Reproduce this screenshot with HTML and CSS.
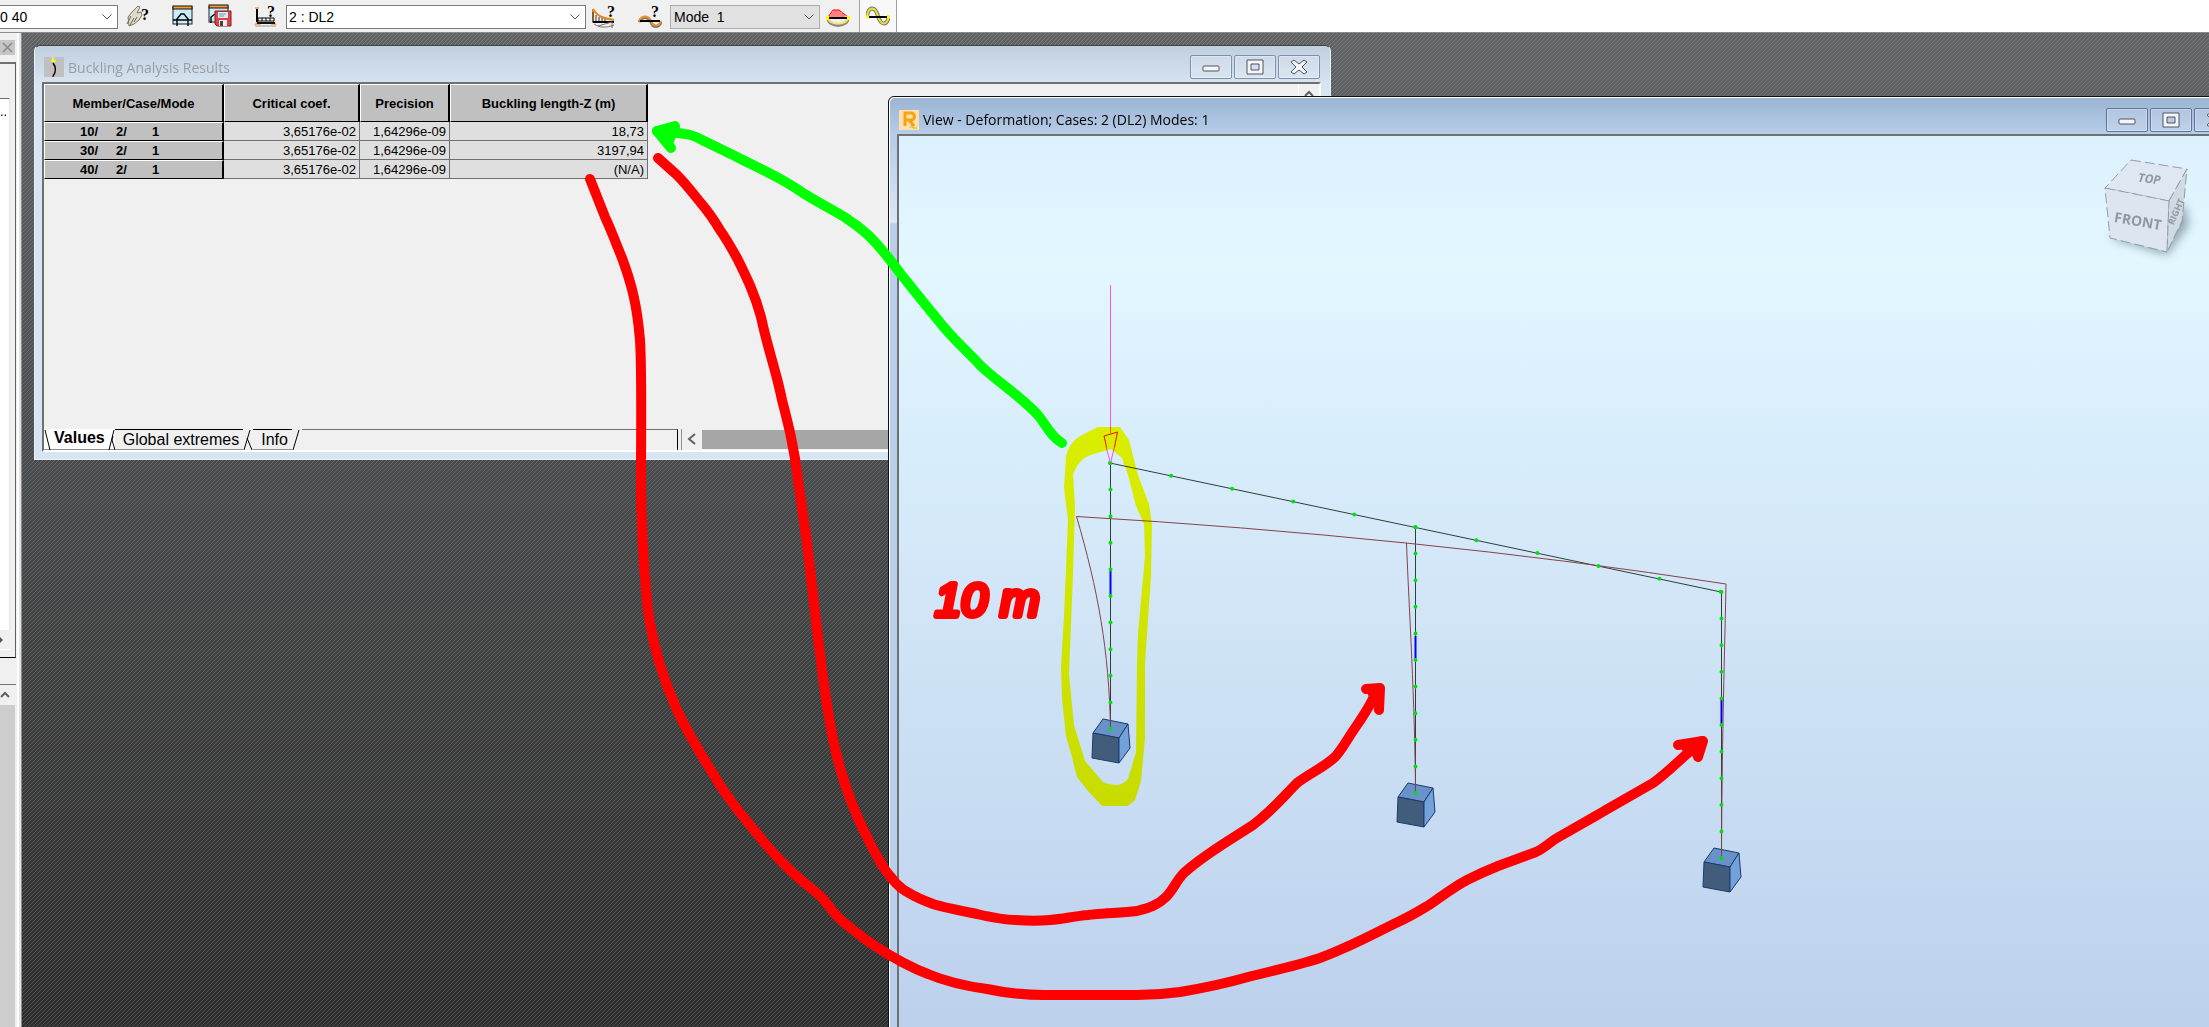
FILE: index.html
```html
<!DOCTYPE html>
<html lang="en">
<head>
  <meta charset="UTF-8" />
  <meta name="viewport" content="width=device-width, initial-scale=1.0" />
  <title>Buckling Analysis Results</title>
  <link rel="stylesheet" href="styles.css">
</head>
<body>
  <header class="topbar">
    <div class="toolbar">
      <select class="combo combo-members" aria-label="Members"><option>0 40</option></select>
      <button class="tool" aria-label="Select">
        <svg viewBox="0 0 24 24">
          <path d="M2 13l4-5 6-6 2 1-3 6 4-1 1 3-3 5-5 4-5 2z" fill="#e0dccc" stroke="#77776c"/>
          <path d="M1 20l4-8M4 21l4-7M8 18l3-5" stroke="#66665c" fill="none"/>
          <text x="15" y="16" class="q">?</text>
        </svg>
      </button>
      <button class="tool wide-left" aria-label="View">
        <svg viewBox="0 0 24 24">
          <rect x="1" y="3" width="19" height="17" fill="#c8ecfc" stroke="#222"/>
          <rect x="1" y="2" width="19" height="3" fill="#f89a2c" stroke="#111"/>
          <path d="M5 22v-7l4-5h3l4 5v7M1 16h19" fill="none" stroke="#000" stroke-width="1.4"/>
        </svg>
      </button>
      <button class="tool mid-left" aria-label="Save view">
        <svg viewBox="0 0 24 24">
          <rect x="1" y="3" width="19" height="15" fill="#c8ecfc" stroke="#222"/>
          <rect x="1" y="1" width="19" height="3" fill="#f89a2c" stroke="#111"/>
          <path d="M3 19v-6l4-3" fill="none" stroke="#000" stroke-width="1.4"/>
          <path d="M7 7h16v15h-14l-2-2z" fill="#e04048" stroke="#7c2024"/>
          <rect x="10" y="8" width="10" height="6" fill="#d8ecf4"/>
          <path d="M11 10h7M11 12h5" stroke="#7898a8"/>
          <rect x="11" y="16" width="8" height="6" fill="#eee"/>
          <rect x="12" y="17" width="3" height="5" fill="#444"/>
        </svg>
      </button>
      <button class="tool wide-left" aria-label="Load case">
        <svg viewBox="0 0 24 24">
          <path d="M0 21l4-5 3 5zM17 21l3-5 3 5z" fill="#f4b060"/>
          <path d="M3 4v14" stroke="#000" stroke-width="2"/>
          <path d="M1 4h4" stroke="#f4b060" stroke-width="2"/>
          <path d="M4 14h16v3H4zM8 14v3M12 14v3M16 14v3" fill="#fff" stroke="#000"/>
          <path d="M3 19h18" stroke="#111" stroke-width="2"/>
          <path d="M1 22h21" stroke="#999"/>
          <text x="13" y="13" class="q">?</text>
        </svg>
      </button>
      <select class="combo combo-case" aria-label="Case"><option>2 : DL2</option></select>
      <button class="tool" aria-label="Diagram">
        <svg viewBox="0 0 24 24">
          <path d="M1 5v14M1 5c5 8 10 9 21 11" fill="none" stroke="#e08820" stroke-width="2"/>
          <path d="M1 8v10M4 11v7M7 13v5M10 14v4M13 15v3" stroke="#333"/>
          <path d="M1 18h21" stroke="#000" stroke-width="2"/>
          <path d="M2 20c6 4 12 4 20 1M6 22l14-4v6" fill="none" stroke="#777"/>
          <text x="15" y="13" class="q">?</text>
        </svg>
      </button>
      <button class="tool wide-left" aria-label="Deformation">
        <svg viewBox="0 0 24 24">
          <path d="M1 18c3-6 9-6 12 0 2 6 8 6 10 0" fill="none" stroke="#777" stroke-width="3"/>
          <path d="M1 17c3-6 9-6 12 0 2 6 8 6 10 0" fill="none" stroke="#f09028" stroke-width="2"/>
          <path d="M2 17h20" stroke="#000" stroke-width="2"/>
          <text x="13" y="13" class="q">?</text>
        </svg>
      </button>
      <select class="combo combo-mode" aria-label="Mode"><option>Mode&nbsp; 1</option></select>
      <button class="tool" aria-label="Stress">
        <svg viewBox="0 0 24 24">
          <path d="M2 14c0 10 20 10 20 0" fill="none" stroke="#888" stroke-width="3"/>
          <path d="M2 13c0 9 20 9 20 0" fill="none" stroke="#f8e070" stroke-width="2"/>
          <path d="M2 13l5-7h6l9 7z" fill="#fff"/>
          <path d="M4 13v-2M6 13V8M8 13V6M10 13V6M12 13V6M14 13V7M16 13V9M18 13v-3" stroke="#f00"/>
          <path d="M2 13l5-7h6l9 7" fill="none" stroke="#f00"/>
          <path d="M2 14h20" stroke="#000" stroke-width="2"/>
          <path d="M0 14h3M21 14h3" stroke="#ff0" stroke-width="4"/>
        </svg>
      </button>
      <button class="tool pressed" aria-label="Buckling shape">
        <svg viewBox="0 0 24 24">
          <path d="M1 14c2-10 8-10 11 0s9 10 11 0" fill="none" stroke="#777" stroke-width="4"/>
          <path d="M1 14c2-10 8-10 11 0s9 10 11 0" fill="none" stroke="#ece030" stroke-width="2"/>
          <path d="M2 15h20" stroke="#000" stroke-width="2"/>
          <path d="M0 15h3M21 15h3" stroke="#ff0" stroke-width="3"/>
        </svg>
      </button>
    </div>
  </header>

  <main class="workspace">
    <aside class="sidebar">
      <div class="side-head">
        <button class="side-close" aria-label="Close">
          <svg viewBox="0 0 15 15"><path d="M3 3l9 9M12 3l-9 9" stroke="#888" stroke-width="1.5"/></svg>
        </button>
      </div>
      <div class="side-panel">
        <div class="side-list"><span>..</span></div>
        <div class="side-hscroll">
          <svg viewBox="0 0 10 20"><path d="M0 7l3 3-3 3z" fill="#555"/></svg>
        </div>
      </div>
      <div class="side-lower">
        <svg viewBox="0 0 14 20"><path d="M1 12l4-4 4 4" fill="none" stroke="#606060" stroke-width="2"/></svg>
        <div class="side-thumb"></div>
      </div>
    </aside>

    <section class="desktop">
      <article class="window results">
        <div class="titlebar">
          <svg class="app-icon" viewBox="0 0 20 20">
            <rect width="20" height="20" fill="#c0c0c0"/>
            <path d="M9 0v5M7 4h5" stroke="#ff0" stroke-width="1.5"/>
            <path d="M9 6c3 4 3 9 0 13" fill="none" stroke="#000" stroke-width="1.5"/>
            <rect x="8" y="19" width="2" height="1" fill="#f00"/>
          </svg>
          <h1>Buckling Analysis Results</h1>
          <div class="win-buttons">
            <button aria-label="Minimize"><svg viewBox="0 0 20 18"><rect x="2" y="8" width="16" height="5" rx="1"/></svg></button>
            <button aria-label="Maximize"><svg viewBox="0 0 20 18"><path fill-rule="evenodd" d="M2 2h16v14H2zM6 6v6h8V6z"/></svg></button>
            <button aria-label="Close"><svg viewBox="0 0 20 18"><path d="M2 4l3-2 5 4 5-4 3 2-5 5 5 5-3 2-5-4-5 4-3-2 5-5z"/></svg></button>
          </div>
        </div>
        <div class="client">
          <div class="grid-area">
            <table>
              <thead>
                <tr>
                  <th class="col-member">Member/Case/Mode</th>
                  <th class="col-coef">Critical coef.</th>
                  <th class="col-precision">Precision</th>
                  <th class="col-length">Buckling length-Z (m)</th>
                </tr>
              </thead>
              <tbody>
                <tr><th><span>10/</span><span>2/</span><span>1</span></th><td>3,65176e-02</td><td>1,64296e-09</td><td>18,73</td></tr>
                <tr><th><span>30/</span><span>2/</span><span>1</span></th><td>3,65176e-02</td><td>1,64296e-09</td><td>3197,94</td></tr>
                <tr><th><span>40/</span><span>2/</span><span>1</span></th><td>3,65176e-02</td><td>1,64296e-09</td><td>(N/A)</td></tr>
              </tbody>
            </table>
            <div class="vscroll">
              <svg viewBox="0 0 20 20"><path d="M6 12l4-4 4 4" fill="none" stroke="#606060" stroke-width="2"/></svg>
            </div>
          </div>
          <div class="tabs">
            <button class="tab active"><svg viewBox="0 0 7 21"><path d="M1 1l5 20"/></svg>Values<svg viewBox="0 0 7 21"><path d="M1 21l5-20M5 7l-1 4 3 10"/></svg></button>
            <button class="tab">Global extremes</button>
            <svg class="tab-edge" viewBox="0 0 10 21"><path d="M1 21l6-20M4 9l5 12"/></svg>
            <button class="tab">Info</button>
            <svg class="tab-edge" viewBox="0 0 10 21"><path d="M1 21l6-20"/></svg>
            <div class="tab-rest"></div>
            <div class="hscroll">
              <svg viewBox="0 0 20 20"><path d="M13 5l-6 5 6 5" fill="none" stroke="#606060" stroke-width="2"/></svg>
              <div class="thumb"></div>
            </div>
          </div>
        </div>
      </article>

      <article class="window view">
        <div class="titlebar">
          <svg class="app-icon" viewBox="0 0 20 20">
            <rect width="20" height="20" fill="#fde0b0"/>
            <path d="M6 16V3h6a3 3 0 0 1 0 7H7M10 10l5 6" fill="none" stroke="#f5a312" stroke-width="3"/>
            <path d="M11 18l3-4v4h4" fill="none" stroke="#f5a312"/>
          </svg>
          <h1>View - Deformation; Cases: 2 (DL2) Modes: 1</h1>
          <div class="win-buttons">
            <button aria-label="Minimize"><svg viewBox="0 0 20 18"><rect x="2" y="8" width="16" height="5" rx="1"/></svg></button>
            <button aria-label="Maximize"><svg viewBox="0 0 20 18"><path fill-rule="evenodd" d="M2 2h16v14H2zM6 6v6h8V6z"/></svg></button>
            <button aria-label="Close"><svg viewBox="0 0 20 18"><path d="M2 4l3-2 5 4 5-4 3 2-5 5 5 5-3 2-5-4-5 4-3-2 5-5z"/></svg></button>
          </div>
        </div>
        <div class="client">
          <svg class="model" viewBox="899 136 1310 890">
            <defs>
              <g id="support" stroke="#1c3a70">
                <path d="M-7 -10l25 5-9 14-26-5z" fill="#6793c8"/>
                <path d="M-17 4l26 5v25l-27-5z" fill="#425d7c"/>
                <path d="M9 9l9-14 2 24-11 15z" fill="#73a2da"/>
              </g>
              <filter id="soft" x="-50%" y="-50%" width="200%" height="200%"><feGaussianBlur stdDeviation="5"/></filter>
            </defs>

            <!-- supports -->
            <use href="#support" x="1110" y="729"/>
            <use href="#support" x="1415" y="793"/>
            <use href="#support" x="1721" y="858"/>

            <!-- frame -->
            <path class="bar" d="M1110.5 463V729M1415.5 527V793M1721.5 592V858"/>
            <path class="bar" d="M1110 463L1721 592"/>
            <path class="mid" d="M1110.5 571v24M1415.5 636v24M1721.5 700v24"/>

            <!-- buckled shape -->
            <path class="deformed" d="M1076.5 516.5Q1240 526 1406 543T1726 584M1076.5 516.5C1098 590 1109 650 1110.5 729M1406.5 543C1409 610 1415 700 1415.5 793M1726 584C1724 680 1722 740 1721.5 858"/>

            <!-- nodes -->
            <path class="nodes" d="M1110.5 463V730M1415.5 527V794M1721.5 592V859" stroke-dasharray="0 26.6"/>
            <path class="nodes" d="M1110 463L1722 592" stroke-dasharray="0 62.4"/>

            <!-- load -->
            <path d="M1110.5 285v148M1106 447l4.500 16 4-16" fill="none" stroke="#ff50f0"/>
            <path d="M1106.500 447l-2.500-11 13.500-4-3 15" fill="none" stroke="#f01010"/>

            <!-- view cube -->
            <path d="M2110 238l57 17 22-30-4-20-50 20z" fill="#5d7480" opacity=".6" filter="url(#soft)"/>
            <g class="cube">
              <path d="M2131 160l56 9-18 32-64-13z" fill="#dfe8f2"/>
              <path d="M2105 188l64 13-2 51-57-14z" fill="#dde6f0"/>
              <path d="M2169 201l18-32-5 52-15 31z" fill="#d0dae5"/>
              <text x="2149" y="183" transform="rotate(6 2149 183)" class="top">TOP</text>
              <text x="2137" y="226" transform="rotate(10 2137 226)" class="front">FRONT</text>
              <text x="2179" y="213" transform="rotate(-66 2179 213)" class="side">RIGHT</text>
            </g>
          </svg>
        </div>
      </article>
    </section>
  </main>

  <!-- pen notes over both windows -->
  <svg class="ink" viewBox="0 0 2209 1027">
    <path class="marker" fill-rule="evenodd" d="M1098 427H1120L1129 440 1138 475 1149 504 1152 524 1151 577 1145 663V738L1141 781 1135 800 1128 806H1102L1088 791 1077 777 1072 757 1066 736 1062 699 1061 666 1064 616 1068 520 1064 488 1066 456Q1069 443 1080 436Q1088 432 1098 427ZM1097 453Q1087 456 1083 459Q1075 467 1073 475L1075 506 1073 574 1069 674 1074 725 1085 761 1103 782Q1109 785 1117 785Q1124 784 1128 779L1136 752 1137 663 1138 634 1145 556 1144 524 1136 506 1128 475 1122 458 1111 449Z"/>
    <g class="pen green">
      <path d="M1062 443C1050 436 1046 424 1037 414C1018 394 1000 384 980 365C965 349 950 336 938 320C923 302 912 288 900 273C888 257 880 246 867 234C846 215 825 207 803 193C781 177 760 169 737 157L700 139C692 134 680 133 657 131"/>
      <path d="M657 131l18-5M657 131l14 17M657 131l12 10 4-11z"/>
    </g>
    <g class="pen red">
      <path d="M590 179L605 217C612 232 617 246 622 258C632 285 637 305 640 340C642 370 641 430 641 480C641 530 644 570 647 602C651 640 660 670 674 703C685 730 700 752 715 777C730 802 744 818 759 836C773 854 782 862 793 873C808 887 815 890 824 900C829 906 832 912 841 920C852 929 864 939 875 946C892 957 909 967 928 974C947 982 965 986 987 989C1006 993 1025 995 1045 995H1137C1152 995 1166 994 1180 992C1204 988 1227 983 1248 977C1276 970 1299 965 1320 958C1350 947 1373 934 1398 922C1411 916 1419 911 1429 905C1441 897 1452 888 1467 880C1477 875 1488 870 1498 866L1536 852C1545 848 1550 842 1557 838L1653 783C1671 770 1683 756 1702 741"/>
      <path d="M1703 741l-25 4M1703 741l-5 16M1703 741l-17 6 11 6z"/>
      <path d="M658 158L677 175C685 183 692 192 700 202C707 210 714 220 720 230C727 240 732 249 737 258C748 280 755 295 761 317C768 350 776 370 782 400C788 423 794 446 798 480L807 543 817 630C821 660 824 690 829 717C833 743 839 767 846 787C853 808 860 824 870 843C876 855 882 867 890 876C895 883 901 889 909 893C917 898 925 901 933 904C946 908 962 911 977 914C990 917 1003 920 1016 920C1028 921 1039 921 1050 920C1063 919 1075 916 1088 915C1105 913 1121 913 1137 911C1149 908 1158 905 1166 897C1174 889 1177 879 1185 872C1205 854 1230 840 1253 825C1272 811 1284 796 1297 783C1310 773 1323 768 1335 757C1343 748 1348 738 1355 728C1364 715 1369 707 1374 697"/>
      <path d="M1380 688l-14 1M1380 688l-1 22M1379 689l-8 14M1379 690v14l-6-10z"/>
    </g>
    <text x="935" y="616" class="note">10 m</text>
  </svg>
</body>
</html>
```
FILE: styles.css
```css
* {
  box-sizing: border-box;
}

body {
  font-family: "Liberation Sans", Arial, sans-serif;
  font-size: 13px;
  margin: 0;
  height: 100vh;
  display: flex;
  flex-direction: column;
  overflow: hidden;
  position: relative;
  color: #000;
}

button {
  font: inherit;
  color: inherit;
  background: none;
  border: none;
  padding: 0;
}

svg {
  display: block;
}

/* toolbar */
.topbar {
  background: #fff;
  display: flex;
  flex: none;
}

.toolbar {
  display: flex;
  align-items: center;
  background: #f0f0f0;
  border-right: 1px solid #a0a0a0;
  height: 32px;
}

.combo {
  appearance: none;
  height: 24px;
  font: inherit;
  font-size: 14px;
  color: #000;
  padding: 0 2px;
  margin-top: 2px;
  border: 1px solid #7a7a7a;
  border-radius: 0;
  background: #fff url("data:image/svg+xml,%3Csvg xmlns='http://www.w3.org/2000/svg' width='10' height='6'%3E%3Cpath d='M.5 .5l4.500 4.500 4.500-4.500' fill='none' stroke='%23555'/%3E%3C/svg%3E") no-repeat right 5px center;
}

.combo-members {
  width: 118px;
  margin-right: 8px;
  padding-left: 0;
  border-left: none;
}

.combo-case {
  width: 300px;
  margin-right: 6px;
  margin-left: 8px;
}

.combo-mode {
  width: 150px;
  margin-right: 6px;
  margin-left: 8px;
  padding-left: 3px;
  border-color: #adadad;
  background-color: #e1e1e1;
}

.tool {
  width: 24px;
  height: 28px;
}

.tool svg {
  width: 24px;
  height: 24px;
}

.wide-left {
  margin-left: 22px;
}

.mid-left {
  margin-left: 12px;
}

.pressed {
  width: 37px;
  height: 32px;
  margin-left: 9px;
  padding: 0 6px 4px;
  border-left: 1px solid #a0a0a0;
  background: #f8f8f8;
}

.q {
  font-family: "Liberation Serif", serif;
  font-weight: bold;
  font-size: 16px;
}

/* workspace */
.workspace {
  flex: 1;
  display: flex;
  min-height: 0;
  border-top: 1px solid #8c8c8c;
}

.sidebar {
  width: 22px;
  display: flex;
  flex-direction: column;
  background: #f0f0f0;
  border-right: 1px solid #8c8c8c;
  box-shadow: inset -2px 0 #e3e3e3, inset -4px 0 #fff;
}

.side-head {
  height: 29px;
  padding-top: 7px;
}

.side-close {
  width: 15px;
  height: 15px;
  background: #c6c6c6;
}

.side-panel {
  width: 16px;
  height: 596px;
  padding: 34px 5px 9px 0;
  border-top: 2px solid #707070;
  border-right: 1px solid #606060;
  border-bottom: 1px solid #000;
}

.side-list {
  height: 532px;
  background: #fff;
  border-top: 1px solid #707070;
  border-right: 1px solid #e3e3e3;
  padding-top: 5px;
}

.side-hscroll {
  height: 20px;
  border-bottom: 1px solid #fff;
}

.side-hscroll svg {
  width: 10px;
  height: 20px;
}

.side-lower {
  flex: 1;
  display: flex;
  flex-direction: column;
  width: 16px;
  margin-top: 26px;
  border-top: 1px solid #707070;
}

.side-lower svg {
  width: 14px;
  height: 20px;
}

.side-thumb {
  flex: 1;
  width: 15px;
  background: #cdcdcd;
}

.desktop {
  flex: 1;
  position: relative;
  overflow: hidden;
  background:
    url("data:image/svg+xml,%3Csvg xmlns='http://www.w3.org/2000/svg' width='4' height='4' shape-rendering='crispEdges'%3E%3Cpath d='M0 3h1v1H0zM1 2h1v1H1zM2 1h1v1H2zM3 0h1v1H3z' fill='%23fff' fill-opacity='.16'/%3E%3C/svg%3E"),
    linear-gradient(#616264, #4a4b4c 42%, #2d2d2d);
}

/* child windows */
.window {
  position: absolute;
  display: flex;
  flex-direction: column;
}

.results {
  left: 12px;
  top: 12px;
  width: 1297px;
  height: 415px;
  padding: 0 9px 7px 7px;
  border: 1px solid #e8f0f8;
  border-top-color: #444;
  border-radius: 6px 6px 0 0;
  background: linear-gradient(#c0cfde, #d7e4f2 38px);
}

.view {
  left: 866px;
  right: -38px;
  top: 63px;
  bottom: -20px;
  padding: 0 9px 9px 8px;
  border: 1px solid #111;
  border-radius: 6px 0 0 0;
  background: linear-gradient(#9ab4d2, #b7cde8 38px, #b9cfe9 50px, #dbe6f6 125px, #b9cfe9 127px);
  box-shadow: inset 1px 1px #fff;
}

.titlebar {
  flex: none;
  display: flex;
  align-items: center;
  gap: 4px;
  height: 36px;
  padding: 6px 1px 0 2px;
}

.view .titlebar {
  height: 37px;
  padding-top: 8px;
}

.titlebar h1 {
  flex: 1;
  margin: 0;
  font-family: "Open Sans", sans-serif;
  font-size: 14px;
  font-weight: normal;
}

.results h1 {
  color: #9a9ea4;
}

.app-icon {
  width: 20px;
  height: 20px;
}

.win-buttons {
  display: flex;
  gap: 2px;
  align-self: flex-start;
  margin-top: 3px;
}

.win-buttons button {
  width: 42px;
  height: 24px;
  border: 1px solid #7f90ac;
  border-radius: 2px;
  background: rgba(255, 255, 255, 0.15);
  box-shadow: inset 0 0 0 1px rgba(255, 255, 255, 0.3);
}

.view .win-buttons button {
  border-color: #5f7498;
}

.win-buttons svg {
  width: 20px;
  height: 18px;
  margin: 0 auto;
  fill: #f6f6f6;
  stroke: #4e5468;
}

.client {
  flex: 1;
  min-height: 0;
  display: flex;
  flex-direction: column;
  border: 2px solid #707070;
  border-right-color: #fff;
  border-bottom-color: #fff;
  background: #f0f0f0;
}

.view .client {
  background: linear-gradient(#dcf1fe, #e2f7ff 14%, #d9eefb 32%, #cfe3f6 57%, #bcd0ec);
}

.grid-area {
  flex: 1;
  display: flex;
  justify-content: space-between;
}

table {
  align-self: flex-start;
  border-collapse: separate;
  border-spacing: 0;
  table-layout: fixed;
  width: 604px;
}

th {
  background: #c0c0c0;
  padding: 0;
  border: 1px solid #000;
  border-top-color: #fff;
  border-left-color: #fff;
  border-right-width: 2px;
}

thead th {
  height: 38px;
}

.col-member {
  width: 180px;
}

.col-coef {
  width: 136px;
}

.col-precision {
  width: 90px;
}

tbody th {
  height: 19px;
  padding-left: 35px;
  text-align: left;
}

tbody th span {
  display: inline-block;
  width: 36px;
}

td {
  background: #dfdfdf;
  padding: 0 3px;
  text-align: right;
  border-right: 1px solid #707070;
  border-bottom: 1px solid #707070;
}

.vscroll {
  width: 21px;
  border-left: 1px solid #fff;
}

.vscroll svg {
  width: 20px;
  height: 20px;
}

.tabs {
  display: flex;
  height: 21px;
  font-size: 16px;
}

.tabs svg {
  height: 21px;
  fill: none;
  stroke: #000;
}

.tab {
  height: 21px;
  padding: 0 4px 0 8px;
  border-top: 1px solid #000;
  border-bottom: 1px solid #909090;
}

.tab.active {
  display: flex;
  gap: 3px;
  padding: 0;
  border-top: none;
  background: #fff;
  font-weight: bold;
}

.active svg {
  width: 7px;
}

.tab-edge {
  width: 10px;
}

.tab-rest {
  flex: none;
  width: 376px;
  border-top: 1px solid #707070;
  border-right: 1px solid #000;
}

.hscroll {
  flex: 1;
  display: flex;
  margin-left: 3px;
  border-left: 1px solid #909090;
}

.hscroll svg {
  width: 20px;
  height: 20px;
}

.thumb {
  flex: 1;
  margin: 1px 0;
  background: #a6a6a6;
}

/* model view */
.model {
  flex: none;
  width: 1310px;
  height: 890px;
}

.bar {
  fill: none;
  stroke: #2c4038;
}

.mid {
  stroke: #0000ff;
  stroke-width: 2;
}

.deformed {
  fill: none;
  stroke: #8a4048;
}

.nodes {
  fill: none;
  stroke: #00e010;
  stroke-width: 4;
  stroke-linecap: round;
}

.cube path {
  stroke: #929da6;
  stroke-dasharray: 10 4;
}

.cube text {
  font-family: "Open Sans", sans-serif;
  font-weight: bold;
  fill: #8d989f;
  text-anchor: middle;
}

.top {
  font-size: 12px;
  font-style: italic;
}

.front {
  font-size: 14px;
}

.side {
  font-size: 9px;
}

/* annotations */
.ink {
  position: absolute;
  left: 0;
  top: 0;
  width: 2209px;
  height: 1027px;
  pointer-events: none;
}

.marker {
  fill: #ff0;
  mix-blend-mode: multiply;
}

.ink {
  isolation: auto;
}

.pen {
  fill: none;
  stroke-width: 10;
  stroke-linecap: round;
  stroke-linejoin: round;
}

.green {
  stroke: #0f0;
}

.red {
  stroke: #f00;
}

.note {
  font-size: 47px;
  font-style: italic;
  fill: #f00;
  stroke: #f00;
  stroke-width: 6;
  stroke-linejoin: round;
}
```
